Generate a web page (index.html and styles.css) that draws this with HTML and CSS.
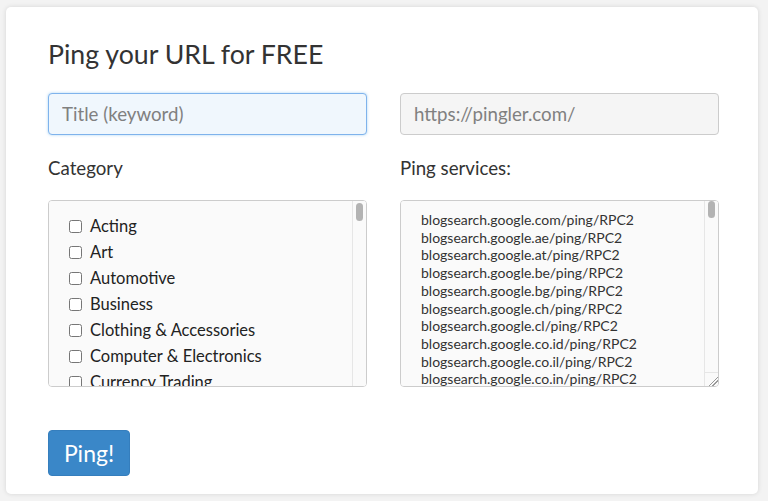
FILE: index.html
```html
<!DOCTYPE html>
<html lang="en">
<head>
<meta charset="utf-8">
<title>Ping your URL for FREE</title>
<link rel="stylesheet" href="styles.css">
</head>
<body>
<main class="card">
  <h1 class="title">Ping your URL for FREE</h1>
  <form class="form">
    <div class="row">
      <input class="field field-focus" type="text" placeholder="Title (keyword)">
      <input class="field field-url" type="text" placeholder="https://pingler.com/">
    </div>
    <div class="row">
      <div class="col">
        <div class="label">Category</div>
        <div class="box-wrap">
          <div class="box cats">
            <label class="cat"><input type="checkbox"><span>Acting</span></label>
            <label class="cat"><input type="checkbox"><span>Art</span></label>
            <label class="cat"><input type="checkbox"><span>Automotive</span></label>
            <label class="cat"><input type="checkbox"><span>Business</span></label>
            <label class="cat"><input type="checkbox"><span>Clothing &amp; Accessories</span></label>
            <label class="cat"><input type="checkbox"><span>Computer &amp; Electronics</span></label>
            <label class="cat"><input type="checkbox"><span>Currency Trading</span></label>
            <label class="cat"><input type="checkbox"><span>Dating</span></label>
            <label class="cat"><input type="checkbox"><span>Design</span></label>
            <label class="cat"><input type="checkbox"><span>Education</span></label>
            <label class="cat"><input type="checkbox"><span>Entertainment</span></label>
            <label class="cat"><input type="checkbox"><span>Family</span></label>
            <label class="cat"><input type="checkbox"><span>Fashion</span></label>
            <label class="cat"><input type="checkbox"><span>Finance</span></label>
            <label class="cat"><input type="checkbox"><span>Food &amp; Drink</span></label>
            <label class="cat"><input type="checkbox"><span>Gambling</span></label>
            <label class="cat"><input type="checkbox"><span>Games</span></label>
            <label class="cat"><input type="checkbox"><span>Gardening</span></label>
            <label class="cat"><input type="checkbox"><span>Health &amp; Fitness</span></label>
            <label class="cat"><input type="checkbox"><span>Hobbies</span></label>
            <label class="cat"><input type="checkbox"><span>Home &amp; Garden</span></label>
            <label class="cat"><input type="checkbox"><span>Insurance</span></label>
            <label class="cat"><input type="checkbox"><span>Internet</span></label>
            <label class="cat"><input type="checkbox"><span>Jobs &amp; Careers</span></label>
            <label class="cat"><input type="checkbox"><span>Law</span></label>
            <label class="cat"><input type="checkbox"><span>Lifestyle</span></label>
            <label class="cat"><input type="checkbox"><span>Marketing</span></label>
            <label class="cat"><input type="checkbox"><span>Medicine</span></label>
            <label class="cat"><input type="checkbox"><span>Movies</span></label>
            <label class="cat"><input type="checkbox"><span>Music</span></label>
            <label class="cat"><input type="checkbox"><span>News</span></label>
            <label class="cat"><input type="checkbox"><span>Parenting</span></label>
            <label class="cat"><input type="checkbox"><span>Pets</span></label>
            <label class="cat"><input type="checkbox"><span>Photography</span></label>
            <label class="cat"><input type="checkbox"><span>Politics</span></label>
            <label class="cat"><input type="checkbox"><span>Real Estate</span></label>
            <label class="cat"><input type="checkbox"><span>Recreation</span></label>
            <label class="cat"><input type="checkbox"><span>Reference</span></label>
            <label class="cat"><input type="checkbox"><span>Religion</span></label>
            <label class="cat"><input type="checkbox"><span>Science</span></label>
            <label class="cat"><input type="checkbox"><span>Shopping</span></label>
            <label class="cat"><input type="checkbox"><span>Society</span></label>
            <label class="cat"><input type="checkbox"><span>Software</span></label>
            <label class="cat"><input type="checkbox"><span>Sports</span></label>
            <label class="cat"><input type="checkbox"><span>Technology</span></label>
            <label class="cat"><input type="checkbox"><span>Travel</span></label>
            <label class="cat"><input type="checkbox"><span>TV</span></label>
            <label class="cat"><input type="checkbox"><span>Web Design</span></label>
            <label class="cat"><input type="checkbox"><span>Web Hosting</span></label>
            <label class="cat"><input type="checkbox"><span>Wedding</span></label>
            <label class="cat"><input type="checkbox"><span>Women</span></label>
            <label class="cat"><input type="checkbox"><span>Writing</span></label>
            <label class="cat"><input type="checkbox"><span>Other</span></label>
          </div>
          <div class="track"><div class="thumb thumb-cats"></div></div>
        </div>
      </div>
      <div class="col">
        <div class="label">Ping services:</div>
        <div class="box-wrap">
          <textarea class="box services">blogsearch.google.com/ping/RPC2
blogsearch.google.ae/ping/RPC2
blogsearch.google.at/ping/RPC2
blogsearch.google.be/ping/RPC2
blogsearch.google.bg/ping/RPC2
blogsearch.google.ch/ping/RPC2
blogsearch.google.cl/ping/RPC2
blogsearch.google.co.id/ping/RPC2
blogsearch.google.co.il/ping/RPC2
blogsearch.google.co.in/ping/RPC2
blogsearch.google.co.jp/ping/RPC2
blogsearch.google.co.ma/ping/RPC2
blogsearch.google.co.nz/ping/RPC2
blogsearch.google.co.th/ping/RPC2
blogsearch.google.co.uk/ping/RPC2
blogsearch.google.co.ve/ping/RPC2
blogsearch.google.co.za/ping/RPC2
blogsearch.google.com.ar/ping/RPC2
blogsearch.google.com.au/ping/RPC2
blogsearch.google.com.br/ping/RPC2
blogsearch.google.com.co/ping/RPC2
blogsearch.google.com.do/ping/RPC2
blogsearch.google.com.mx/ping/RPC2
blogsearch.google.com.my/ping/RPC2
blogsearch.google.com.pe/ping/RPC2
blogsearch.google.com.sa/ping/RPC2
blogsearch.google.com.sg/ping/RPC2
blogsearch.google.com.tr/ping/RPC2
blogsearch.google.com.tw/ping/RPC2
blogsearch.google.com.ua/ping/RPC2
blogsearch.google.com.uy/ping/RPC2
blogsearch.google.com.vn/ping/RPC2
blogsearch.google.de/ping/RPC2
blogsearch.google.es/ping/RPC2
blogsearch.google.fi/ping/RPC2
blogsearch.google.fr/ping/RPC2
blogsearch.google.gr/ping/RPC2
blogsearch.google.hr/ping/RPC2
blogsearch.google.ie/ping/RPC2
blogsearch.google.in/ping/RPC2
blogsearch.google.it/ping/RPC2
blogsearch.google.jp/ping/RPC2
blogsearch.google.ki/ping/RPC2
blogsearch.google.kz/ping/RPC2
blogsearch.google.la/ping/RPC2
blogsearch.google.li/ping/RPC2
blogsearch.google.lk/ping/RPC2
blogsearch.google.lt/ping/RPC2
blogsearch.google.lu/ping/RPC2
blogsearch.google.md/ping/RPC2
blogsearch.google.mn/ping/RPC2
blogsearch.google.ms/ping/RPC2
blogsearch.google.mu/ping/RPC2
blogsearch.google.mv/ping/RPC2
blogsearch.google.mw/ping/RPC2
blogsearch.google.nl/ping/RPC2
blogsearch.google.no/ping/RPC2
blogsearch.google.nr/ping/RPC2
blogsearch.google.nu/ping/RPC2
blogsearch.google.pl/ping/RPC2
blogsearch.google.pn/ping/RPC2
blogsearch.google.pt/ping/RPC2
blogsearch.google.ro/ping/RPC2
blogsearch.google.ru/ping/RPC2
blogsearch.google.rw/ping/RPC2
blogsearch.google.sc/ping/RPC2
blogsearch.google.se/ping/RPC2
blogsearch.google.sh/ping/RPC2
blogsearch.google.si/ping/RPC2
blogsearch.google.sk/ping/RPC2
blogsearch.google.sm/ping/RPC2
blogsearch.google.sn/ping/RPC2
blogsearch.google.st/ping/RPC2
blogsearch.google.tk/ping/RPC2
blogsearch.google.tl/ping/RPC2
blogsearch.google.tm/ping/RPC2
blogsearch.google.to/ping/RPC2
blogsearch.google.tt/ping/RPC2
blogsearch.google.us/ping/RPC2
blogsearch.google.uz/ping/RPC2
blogsearch.google.vg/ping/RPC2
blogsearch.google.vu/ping/RPC2
blogsearch.google.ws/ping/RPC2
rpc.pingomatic.com
rpc.twingly.com
api.feedster.com/ping
api.moreover.com/RPC2
api.moreover.com/ping
api.my.yahoo.com/RPC2
api.my.yahoo.com/rss/ping
bblog.com/ping.php
bitacoras.net/ping
blog.goo.ne.jp/XMLRPC
blogdb.jp/xmlrpc
blogmatcher.com/u.php
bulkfeeds.net/rpc
coreblog.org/ping/
ping.blo.gs/
ping.bloggers.jp/rpc/
ping.feedburner.com
ping.syndic8.com/xmlrpc.php
ping.weblogalot.com/rpc.php
rpc.blogrolling.com/pinger/
rpc.weblogs.com/RPC2
topicexchange.com/RPC2
www.blogdigger.com/RPC2
www.blogoon.net/ping/
www.newsisfree.com/RPCCloud
www.popdex.com/addsite.php
www.weblogues.com/RPC/</textarea>
          <div class="track track-ta"><div class="thumb thumb-ta"></div></div>
          <div class="corner"></div>
        </div>
      </div>
    </div>
    <div class="actions">
      <button class="btn" type="button">Ping!</button>
    </div>
  </form>
</main>
</body>
</html>
```

FILE: styles.css
```css
html, body {
  margin: 0;
  padding: 0;
}
body {
  background: #f3f3f3;
  font-family: Lato, "Open Sans", "Liberation Sans", sans-serif;
  color: #333;
  padding: 7px 10px 7px 6px;
}
.card {
  width: 752px;
  height: 487px;
  box-sizing: border-box;
  background: #fff;
  border-radius: 5px;
  box-shadow: 0 0 5px rgba(0, 0, 0, 0.12);
  padding: 32px 39px 18px 42px;
}
.title {
  margin: 0 0 23px;
  font-size: 26.7px;
  line-height: 31px;
  font-weight: 400;
  color: #333;
}
.form {
  display: flex;
  flex-direction: column;
}
.row {
  display: grid;
  grid-template-columns: 319px 319px;
  column-gap: 33px;
}
.field {
  height: 42px;
  box-sizing: border-box;
  border: 1px solid #ccc;
  border-radius: 4px;
  padding: 0 13px;
  font-family: inherit;
  font-size: 18.7px;
  color: #555;
  background: #fff;
  outline: none;
  margin: 0 0 21px;
}
.field::placeholder {
  color: #808080;
}
.field-focus {
  border-color: #7fb3ec;
  background: #f0f7fd;
  box-shadow: 0 0 3px rgba(102, 175, 233, 0.55);
}
.field-url {
  background: #f5f5f5;
}
.col {
  display: flex;
  flex-direction: column;
}
.label {
  font-size: 18.7px;
  line-height: 24px;
  color: #333;
  margin-bottom: 20px;
}
.box-wrap {
  position: relative;
  height: 187px;
}
.box {
  height: 187px;
  box-sizing: border-box;
  border: 1px solid #ccc;
  border-radius: 4px;
  background: #fafafa;
  overflow-y: scroll;
  margin: 0;
  scrollbar-width: none;
}
.box::-webkit-scrollbar {
  display: none;
}
.track {
  position: absolute;
  top: 1px;
  right: 1px;
  bottom: 1px;
  width: 14px;
  box-sizing: border-box;
  border-left: 1px solid #e6e6e6;
  border-radius: 0 3px 3px 0;
  background: #fafafa;
  pointer-events: none;
}
.track-ta {
  bottom: 15px;
  border-radius: 0 3px 0 0;
}
.thumb {
  position: absolute;
  left: 3px;
  width: 7px;
  border-radius: 4px;
  background: #b3b3b3;
}
.thumb-cats {
  top: 2px;
  height: 18px;
}
.thumb-ta {
  top: 0;
  height: 17px;
}
.corner {
  position: absolute;
  right: 1px;
  bottom: 1px;
  width: 14px;
  height: 14px;
  box-sizing: border-box;
  border-top: 1px solid #e6e6e6;
  border-left: 1px solid #e6e6e6;
  border-radius: 0 0 3px 0;
  pointer-events: none;
  background:
    linear-gradient(135deg, transparent 0 62%, #999 62% 67%, transparent 67% 76%, #999 76% 81%, transparent 81%);
}
.cats {
  display: flex;
  flex-direction: column;
  padding: 12px 0 0 20px;
}
.cat {
  display: flex;
  align-items: center;
  height: 26px;
  flex: none;
  font-size: 16.5px;
  color: #222;
}
.cat input {
  width: 13px;
  height: 13px;
  margin: 0 8px 0 0;
  flex: none;
}
.services {
  display: block;
  width: 319px;
  resize: none;
  padding: 10px 8px 0 20px;
  font-family: inherit;
  font-size: 14px;
  line-height: 17.7px;
  color: #333;
  white-space: pre;
  overflow-x: hidden;
}
.actions {
  margin-top: 43px;
  display: flex;
}
.btn {
  width: 82px;
  height: 46px;
  border: 1px solid #357ebd;
  border-radius: 4px;
  background: #3a87c8;
  color: #fff;
  font-family: inherit;
  font-size: 23px;
  padding: 0;
  cursor: pointer;
}
```
